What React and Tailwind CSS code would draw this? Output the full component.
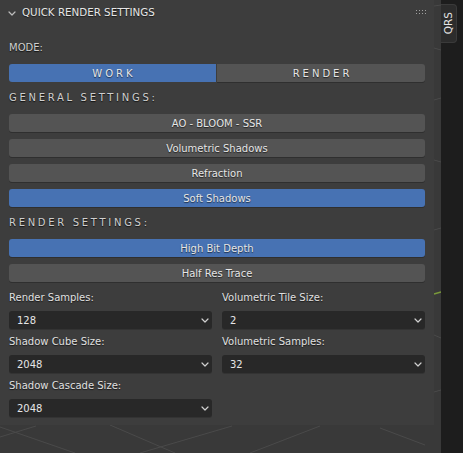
const font = { fontFamily: '"DejaVu Sans", Verdana, sans-serif' };

function Chevron({ className = "" }) {
  return (
    <svg className={className} width="8" height="5" viewBox="0 0 8 5" fill="none" stroke="currentColor" strokeWidth="1.2" strokeLinecap="round" strokeLinejoin="round">
      <polyline points="1 1 4 4 7 1" />
    </svg>
  );
}

function Heading({ children, spaced = false }) {
  return (
    <div
      className={`h-[16px] leading-[16px] text-[10px] text-[#cfcfcf] [text-shadow:0_1px_1px_rgba(0,0,0,0.7)] ${
        spaced ? "tracking-[0.27em]" : ""
      }`}
    >
      {children}
    </div>
  );
}

function Toggle({ label, on }) {
  return (
    <div
      className={`flex h-[18px] items-center justify-center rounded-[3px] text-[10px] text-[#e6e6e6] shadow-[0_1px_0_#2f2f2f] [text-shadow:0_1px_1px_rgba(0,0,0,0.6)] ${
        on ? "bg-[#4772b3]" : "bg-[#545454]"
      }`}
    >
      {label}
    </div>
  );
}

function Dropdown({ value }) {
  return (
    <div className="flex h-[18px] items-center justify-between rounded-[3px] bg-[#282828] pl-[8px] pr-[3px] text-[10px] text-[#e6e6e6] shadow-[0_1px_0_#333]">
      <span>{value}</span>
      <Chevron className="text-[#d0d0d0]" />
    </div>
  );
}

function Field({ label, value }) {
  return (
    <div className="flex flex-col gap-[5px]">
      <div className="h-[16px] leading-[16px] text-[10px] text-[#e0e0e0] [text-shadow:0_1px_1px_rgba(0,0,0,0.6)]">
        {label}
      </div>
      <Dropdown value={value} />
    </div>
  );
}

function Grip() {
  return (
    <div className="grid grid-cols-4 gap-x-[2px] gap-y-[2px]">
      {Array.from({ length: 8 }).map((_, i) => (
        <span key={i} className="h-[1px] w-[1px] bg-[#a0a0a0]" />
      ))}
    </div>
  );
}

export default function App() {
  return (
    <div className="relative flex h-[453px] w-[463px] overflow-hidden bg-[#393939]" style={font}>
      <svg className="absolute left-0 top-0" width="441" height="453" viewBox="0 0 441 453" fill="none" stroke="#4a4a4a" strokeWidth="1">
        <line x1="0" y1="437" x2="36" y2="426" />
        <line x1="0" y1="427" x2="75" y2="453" />
        <line x1="110" y1="425" x2="175" y2="453" />
        <line x1="232" y1="426" x2="140" y2="453" />
        <line x1="320" y1="426" x2="250" y2="453" />
        <line x1="380" y1="428" x2="425" y2="445" />
        <line x1="434" y1="6" x2="441" y2="5" />
        <line x1="434" y1="48" x2="441" y2="50" />
        <line x1="434" y1="100" x2="441" y2="98" />
        <line x1="434" y1="160" x2="441" y2="162" />
        <line x1="434" y1="230" x2="441" y2="228" />
        <line x1="434" y1="335" x2="441" y2="338" />
        <line x1="434" y1="392" x2="441" y2="390" />
        <line x1="434" y1="294" x2="441" y2="292" stroke="#7a9a3a" strokeWidth="1.5" />
      </svg>

      <div className="relative flex w-[441px] flex-col">
        <div className="flex h-[425px] w-[434px] flex-col bg-[#3d3d3d] px-[9px] pb-[8px]">
          <div className="flex h-[26px] items-center">
            <Chevron className="ml-[-1px] text-[#bdbdbd]" />
            <span className="ml-[6px] text-[10.3px] text-[#e6e6e6] [text-shadow:0_1px_1px_rgba(0,0,0,0.6)]">
              QUICK RENDER SETTINGS
            </span>
            <div className="ml-auto mr-[-1px] mt-[-2px]">
              <Grip />
            </div>
          </div>

          <div className="mt-[14px]">
            <Heading>MODE:</Heading>
          </div>
          <div className="mt-[8px] flex h-[18px] gap-[1px] text-[10px] tracking-[0.3em] text-[#e6e6e6] [text-shadow:0_1px_1px_rgba(0,0,0,0.6)]">
            <div className="flex w-[207px] items-center justify-center rounded-l-[3px] bg-[#4772b3] pl-[3px]">
              WORK
            </div>
            <div className="flex flex-1 items-center justify-center rounded-r-[3px] bg-[#545454] pl-[3px] shadow-[0_1px_0_#2f2f2f]">
              RENDER
            </div>
          </div>

          <div className="mt-[8px]">
            <Heading spaced>GENERAL SETTINGS:</Heading>
          </div>
          <div className="mt-[8px] flex flex-col gap-[7px]">
            <Toggle label="AO - BLOOM - SSR" />
            <Toggle label="Volumetric Shadows" />
            <Toggle label="Refraction" />
            <Toggle label="Soft Shadows" on />
          </div>

          <div className="mt-[8px]">
            <Heading spaced>RENDER SETTINGS:</Heading>
          </div>
          <div className="mt-[8px] flex flex-col gap-[7px]">
            <Toggle label="High Bit Depth" on />
            <Toggle label="Half Res Trace" />
          </div>

          <div className="mt-[8px] grid grid-cols-2 gap-x-[10px] gap-y-[5px]">
            <Field label="Render Samples:" value="128" />
            <Field label="Volumetric Tile Size:" value="2" />
            <Field label="Shadow Cube Size:" value="2048" />
            <Field label="Volumetric Samples:" value="32" />
            <Field label="Shadow Cascade Size:" value="2048" />
          </div>
        </div>
      </div>

      <div className="relative w-[22px] bg-[#1d1d1d]">
        <div className="mt-[4px] flex h-[39px] w-[16px] items-center justify-center rounded-r-[4px] border border-l-0 border-[#3a3a3a] bg-[#2c2c2c]">
          <span className="rotate-180 text-[10.5px] text-[#e6e6e6] [writing-mode:vertical-rl]">QRS</span>
        </div>
      </div>
    </div>
  );
}
